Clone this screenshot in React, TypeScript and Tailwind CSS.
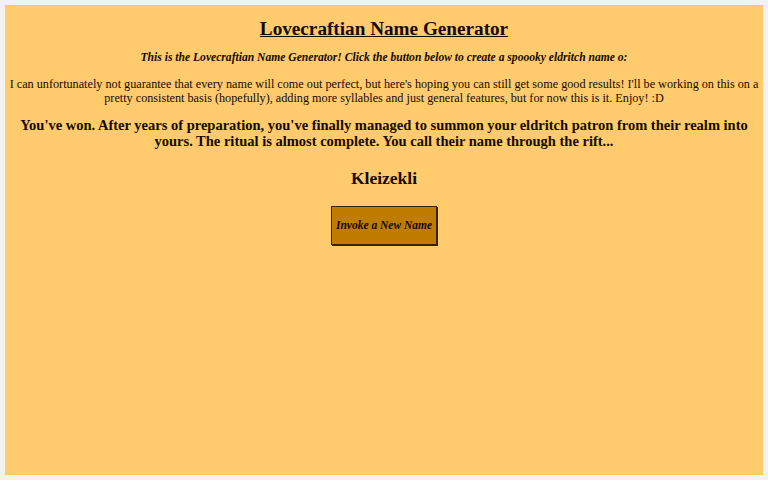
export default function App() {
  return (
    <div className="min-h-screen bg-[#f2f2f2] p-[5px] font-['Liberation_Serif',serif] text-[#140a00]">
      <div className="h-[470px] bg-[#ffcb6c] text-center pt-3">
        <h1 className="text-[19.2px] leading-[23px] font-bold underline">Lovecraftian Name Generator</h1>
        <p className="mt-[11px] text-[11.6px] leading-[14px] font-bold italic">
          This is the Lovecraftian Name Generator! Click the button below to create a spoooky eldritch name o:
        </p>
        <p className="mt-[12px] text-[12.2px] leading-[14px]">
          I can unfortunately not guarantee that every name will come out perfect, but here's hoping you can still get some
          good results! I'll be working on this on a pretty consistent basis (hopefully), adding more syllables and just
          general features, but for now this is it. Enjoy! :D
        </p>
        <p className="mt-[12px] px-1 text-[14.5px] leading-[16px] font-bold">
          You've won. After years of preparation, you've finally managed to summon your eldritch patron from their realm
          into yours. The ritual is almost complete. You call their name through the rift...
        </p>
        <h2 className="mt-[19px] text-[17.5px] leading-[21px] font-bold">Kleizekli</h2>
        <button className="mt-[17px] w-[106px] h-[39px] bg-[#c07c00] border border-[#3a2200] shadow-[1px_1px_0_#3a2200] text-[11.5px] font-bold italic">
          Invoke a New Name
        </button>
      </div>
    </div>
  );
}
